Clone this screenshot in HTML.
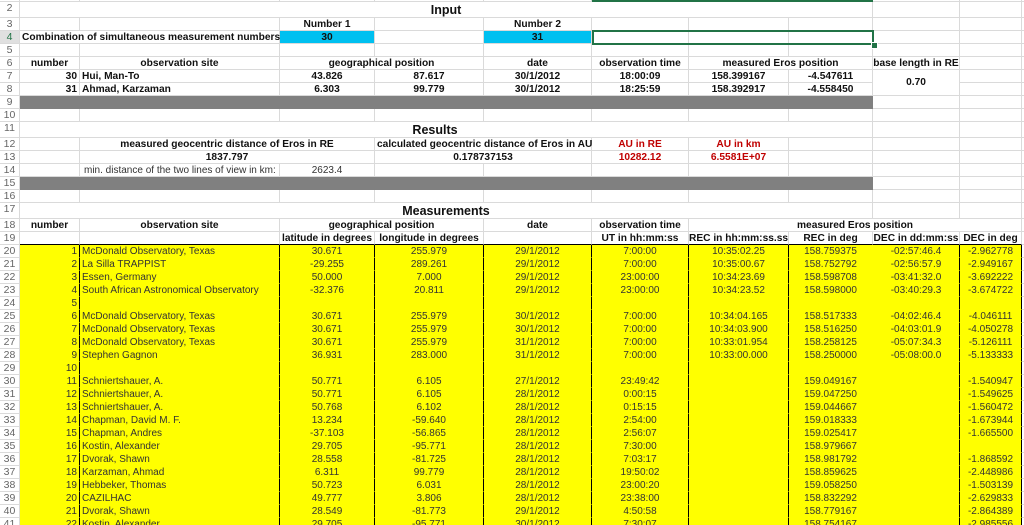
<!DOCTYPE html>
<html><head><meta charset="utf-8">
<style>
html,body{margin:0;padding:0;width:1024px;height:525px;overflow:hidden;background:#fff;}
.w{position:relative;width:1024px;height:525px;overflow:hidden;font-family:"Liberation Sans",Arial,sans-serif;}
.g{display:grid;grid-template-columns:20px 60px 200px 95px 109px 108px 97px 100px 84px 87px 62px 2px;
grid-template-rows:2px 16px repeat(8,13px) 16px repeat(5,13px) 16px repeat(23,13px) 8px;}
.g>div{border-right:1px solid #dadada;border-bottom:1px solid #dadada;box-sizing:border-box;white-space:nowrap;font-size:10px;line-height:13px;padding:0 2px;color:#111;overflow:visible;}
.g>div.h{color:#666;text-align:center;padding:0;font-size:10.5px;}
.c{text-align:center}.r{text-align:right}.b{font-weight:bold;font-size:10.2px!important}
.g>div.y{background:#ffff00;border-bottom-color:#ffff00;border-right-color:#000;color:#333}
.g>div.yh{border-right-color:#ffff00}
.g>div.gb{background:#808080;border-color:#808080;grid-column:span 8}
.g>div.cy{background:#00c0f0}
.g>div.red{color:#c00000}
.g>div.bb{border-bottom-color:#000}
.t{font-size:12.5px!important;font-weight:bold;line-height:16px!important;text-align:center}
.s2{grid-column:span 2}.s8{grid-column:span 8}.s4{grid-column:span 4}
.sel{position:absolute;left:592px;top:30px;width:282px;height:15px;border:2px solid #217346;box-sizing:border-box}
.hd{position:absolute;left:871px;top:42px;width:5px;height:5px;background:#217346;border:1px solid #fff}
</style></head><body><div class="w">
<div class="g">
<div class="h"></div><div></div><div></div><div></div><div></div><div></div><div></div><div></div><div></div><div></div><div></div><div></div>
<div class="h">2</div><div class="s8 t">Input</div><div></div><div></div><div></div>
<div class="h">3</div><div></div><div></div><div class="c b">Number 1</div><div></div><div class="c b">Number 2</div><div></div><div></div><div></div><div></div><div></div><div></div>
<div class="h" style="background:#e0e0e0;color:#217346">4</div><div class="s2 b">Combination of simultaneous measurement numbers</div><div class="cy c b">30</div><div></div><div class="cy c b">31</div><div></div><div></div><div></div><div></div><div></div><div></div>
<div class="h">5</div><div></div><div></div><div></div><div></div><div></div><div></div><div></div><div></div><div></div><div></div><div></div>
<div class="h">6</div><div class="c b">number</div><div class="c b">observation site</div><div class="s2 c b">geographical position</div><div class="c b">date</div><div class="c b">observation time</div><div class="s2 c b">measured Eros position</div><div class="c b" style="padding:0">base length in RE</div><div></div><div></div>
<div class="h">7</div><div class="r b">30</div><div class="b">Hui, Man-To</div><div class="c b">43.826</div><div class="c b">87.617</div><div class="c b">30/1/2012</div><div class="c b">18:00:09</div><div class="c b">158.399167</div><div class="c b">-4.547611</div><div class="c b" style="grid-row:span 2;line-height:25px">0.70</div><div></div><div></div>
<div class="h">8</div><div class="r b">31</div><div class="b">Ahmad, Karzaman</div><div class="c b">6.303</div><div class="c b">99.779</div><div class="c b">30/1/2012</div><div class="c b">18:25:59</div><div class="c b">158.392917</div><div class="c b">-4.558450</div><div></div><div></div>
<div class="h">9</div><div class="gb"></div><div></div><div></div><div></div>
<div class="h">10</div><div></div><div></div><div></div><div></div><div></div><div></div><div></div><div></div><div></div><div></div><div></div>
<div class="h">11</div><div class="s8 t" style="padding-right:24px">Results</div><div></div><div></div><div></div>
<div class="h">12</div><div></div><div class="s2 c b">measured geocentric distance of Eros in RE</div><div class="s2 c b">calculated geocentric distance of Eros in AU</div><div class="c b red">AU in RE</div><div class="c b red">AU in km</div><div></div><div></div><div></div><div></div>
<div class="h">13</div><div></div><div class="s2 c b">1837.797</div><div class="s2 c b">0.178737153</div><div class="c b red">10282.12</div><div class="c b red">6.5581E+07</div><div></div><div></div><div></div><div></div>
<div class="h">14</div><div></div><div style="padding-left:4px;color:#333">min. distance of the two lines of view in km:</div><div class="c" style="color:#333">2623.4</div><div></div><div></div><div></div><div></div><div></div><div></div><div></div><div></div>
<div class="h">15</div><div class="gb"></div><div></div><div></div><div></div>
<div class="h">16</div><div></div><div></div><div></div><div></div><div></div><div></div><div></div><div></div><div></div><div></div><div></div>
<div class="h">17</div><div class="s8 t">Measurements</div><div></div><div></div><div></div>
<div class="h">18</div><div class="c b">number</div><div class="c b">observation site</div><div class="s2 c b">geographical position</div><div class="c b">date</div><div class="c b">observation time</div><div class="s4 c b">measured Eros position</div><div></div>
<div class="h">19</div><div class="bb"></div><div class="bb"></div><div class="c b bb" style="padding:0">latitude in degrees</div><div class="c b bb" style="padding:0">longitude in degrees</div><div class="bb"></div><div class="c b bb">UT in hh:mm:ss</div><div class="c b bb" style="padding:0">REC in hh:mm:ss.ss</div><div class="c b bb">REC in deg</div><div class="c b bb" style="padding:0">DEC in dd:mm:ss</div><div class="c b bb" style="padding:0">DEC in deg</div><div></div>
<div class="h">20</div><div class="y r">1</div><div class="y">McDonald Observatory, Texas</div><div class="y c">30.671</div><div class="y c">255.979</div><div class="y c">29/1/2012</div><div class="y c">7:00:00</div><div class="y c">10:35:02.25</div><div class="y c yh">158.759375</div><div class="y c">-02:57:46.4</div><div class="y c">-2.962778</div><div></div>
<div class="h">21</div><div class="y r">2</div><div class="y">La Silla TRAPPIST</div><div class="y c">-29.255</div><div class="y c">289.261</div><div class="y c">29/1/2012</div><div class="y c">7:00:00</div><div class="y c">10:35:00.67</div><div class="y c yh">158.752792</div><div class="y c">-02:56:57.9</div><div class="y c">-2.949167</div><div></div>
<div class="h">22</div><div class="y r">3</div><div class="y">Essen, Germany</div><div class="y c">50.000</div><div class="y c">7.000</div><div class="y c">29/1/2012</div><div class="y c">23:00:00</div><div class="y c">10:34:23.69</div><div class="y c yh">158.598708</div><div class="y c">-03:41:32.0</div><div class="y c">-3.692222</div><div></div>
<div class="h">23</div><div class="y r">4</div><div class="y">South African Astronomical Observatory</div><div class="y c">-32.376</div><div class="y c">20.811</div><div class="y c">29/1/2012</div><div class="y c">23:00:00</div><div class="y c">10:34:23.52</div><div class="y c yh">158.598000</div><div class="y c">-03:40:29.3</div><div class="y c">-3.674722</div><div></div>
<div class="h">24</div><div class="y r">5</div><div class="y"></div><div class="y c"></div><div class="y c"></div><div class="y c"></div><div class="y c"></div><div class="y c"></div><div class="y c yh"></div><div class="y c"></div><div class="y c"></div><div></div>
<div class="h">25</div><div class="y r">6</div><div class="y">McDonald Observatory, Texas</div><div class="y c">30.671</div><div class="y c">255.979</div><div class="y c">30/1/2012</div><div class="y c">7:00:00</div><div class="y c">10:34:04.165</div><div class="y c yh">158.517333</div><div class="y c">-04:02:46.4</div><div class="y c">-4.046111</div><div></div>
<div class="h">26</div><div class="y r">7</div><div class="y">McDonald Observatory, Texas</div><div class="y c">30.671</div><div class="y c">255.979</div><div class="y c">30/1/2012</div><div class="y c">7:00:00</div><div class="y c">10:34:03.900</div><div class="y c yh">158.516250</div><div class="y c">-04:03:01.9</div><div class="y c">-4.050278</div><div></div>
<div class="h">27</div><div class="y r">8</div><div class="y">McDonald Observatory, Texas</div><div class="y c">30.671</div><div class="y c">255.979</div><div class="y c">31/1/2012</div><div class="y c">7:00:00</div><div class="y c">10:33:01.954</div><div class="y c yh">158.258125</div><div class="y c">-05:07:34.3</div><div class="y c">-5.126111</div><div></div>
<div class="h">28</div><div class="y r">9</div><div class="y">Stephen Gagnon</div><div class="y c">36.931</div><div class="y c">283.000</div><div class="y c">31/1/2012</div><div class="y c">7:00:00</div><div class="y c">10:33:00.000</div><div class="y c yh">158.250000</div><div class="y c">-05:08:00.0</div><div class="y c">-5.133333</div><div></div>
<div class="h">29</div><div class="y r">10</div><div class="y"></div><div class="y c"></div><div class="y c"></div><div class="y c"></div><div class="y c"></div><div class="y c"></div><div class="y c yh"></div><div class="y c"></div><div class="y c"></div><div></div>
<div class="h">30</div><div class="y r">11</div><div class="y">Schniertshauer, A.</div><div class="y c">50.771</div><div class="y c">6.105</div><div class="y c">27/1/2012</div><div class="y c">23:49:42</div><div class="y c"></div><div class="y c yh">159.049167</div><div class="y c"></div><div class="y c">-1.540947</div><div></div>
<div class="h">31</div><div class="y r">12</div><div class="y">Schniertshauer, A.</div><div class="y c">50.771</div><div class="y c">6.105</div><div class="y c">28/1/2012</div><div class="y c">0:00:15</div><div class="y c"></div><div class="y c yh">159.047250</div><div class="y c"></div><div class="y c">-1.549625</div><div></div>
<div class="h">32</div><div class="y r">13</div><div class="y">Schniertshauer, A.</div><div class="y c">50.768</div><div class="y c">6.102</div><div class="y c">28/1/2012</div><div class="y c">0:15:15</div><div class="y c"></div><div class="y c yh">159.044667</div><div class="y c"></div><div class="y c">-1.560472</div><div></div>
<div class="h">33</div><div class="y r">14</div><div class="y">Chapman, David M. F.</div><div class="y c">13.234</div><div class="y c">-59.640</div><div class="y c">28/1/2012</div><div class="y c">2:54:00</div><div class="y c"></div><div class="y c yh">159.018333</div><div class="y c"></div><div class="y c">-1.673944</div><div></div>
<div class="h">34</div><div class="y r">15</div><div class="y">Chapman, Andres</div><div class="y c">-37.103</div><div class="y c">-56.865</div><div class="y c">28/1/2012</div><div class="y c">2:56:07</div><div class="y c"></div><div class="y c yh">159.025417</div><div class="y c"></div><div class="y c">-1.665500</div><div></div>
<div class="h">35</div><div class="y r">16</div><div class="y">Kostin, Alexander</div><div class="y c">29.705</div><div class="y c">-95.771</div><div class="y c">28/1/2012</div><div class="y c">7:30:00</div><div class="y c"></div><div class="y c yh">158.979667</div><div class="y c"></div><div class="y c"></div><div></div>
<div class="h">36</div><div class="y r">17</div><div class="y">Dvorak, Shawn</div><div class="y c">28.558</div><div class="y c">-81.725</div><div class="y c">28/1/2012</div><div class="y c">7:03:17</div><div class="y c"></div><div class="y c yh">158.981792</div><div class="y c"></div><div class="y c">-1.868592</div><div></div>
<div class="h">37</div><div class="y r">18</div><div class="y">Karzaman, Ahmad</div><div class="y c">6.311</div><div class="y c">99.779</div><div class="y c">28/1/2012</div><div class="y c">19:50:02</div><div class="y c"></div><div class="y c yh">158.859625</div><div class="y c"></div><div class="y c">-2.448986</div><div></div>
<div class="h">38</div><div class="y r">19</div><div class="y">Hebbeker, Thomas</div><div class="y c">50.723</div><div class="y c">6.031</div><div class="y c">28/1/2012</div><div class="y c">23:00:20</div><div class="y c"></div><div class="y c yh">159.058250</div><div class="y c"></div><div class="y c">-1.503139</div><div></div>
<div class="h">39</div><div class="y r">20</div><div class="y">CAZILHAC</div><div class="y c">49.777</div><div class="y c">3.806</div><div class="y c">28/1/2012</div><div class="y c">23:38:00</div><div class="y c"></div><div class="y c yh">158.832292</div><div class="y c"></div><div class="y c">-2.629833</div><div></div>
<div class="h">40</div><div class="y r">21</div><div class="y">Dvorak, Shawn</div><div class="y c">28.549</div><div class="y c">-81.773</div><div class="y c">29/1/2012</div><div class="y c">4:50:58</div><div class="y c"></div><div class="y c yh">158.779167</div><div class="y c"></div><div class="y c">-2.864389</div><div></div>
<div class="h">41</div><div class="y r">22</div><div class="y">Kostin, Alexander</div><div class="y c">29.705</div><div class="y c">-95.771</div><div class="y c">30/1/2012</div><div class="y c">7:30:07</div><div class="y c"></div><div class="y c yh">158.754167</div><div class="y c"></div><div class="y c">-2.985556</div><div></div>
</div>
<div class="sel"></div><div class="hd"></div>
<div style="position:absolute;left:592px;top:0;width:281px;height:2px;background:#217346"></div>
</div></body></html>
